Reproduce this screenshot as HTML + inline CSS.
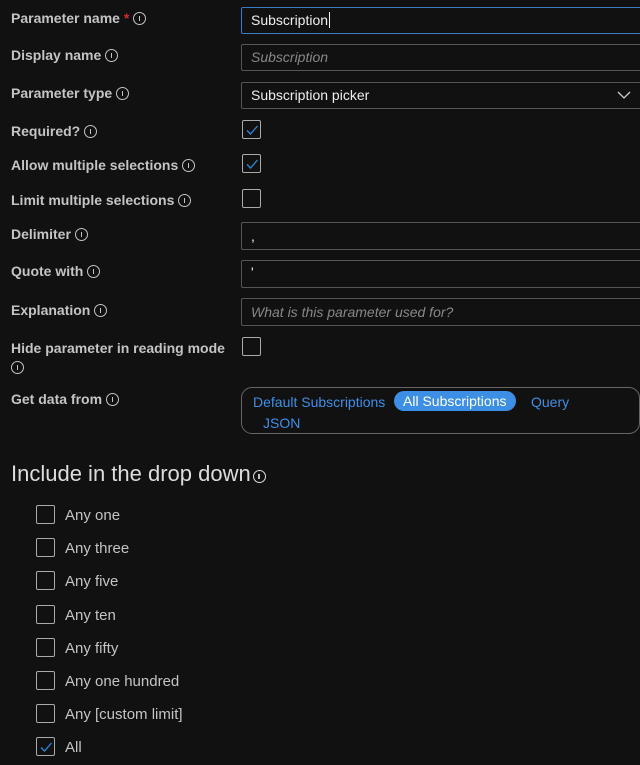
<!DOCTYPE html>
<html><head><style>
body{margin:0;background:#111;width:640px;height:765px;overflow:hidden;position:relative;font-family:"Liberation Sans",sans-serif;color:#c8c8c8}
.l{position:absolute;left:11px;font-size:14px;font-weight:bold;color:#c4c4c4;white-space:nowrap;line-height:16px}
.i{display:inline-block;width:13px;height:13px;border:1.3px solid #c4c4c4;border-radius:50%;position:relative;vertical-align:-2px;margin-left:4px;box-sizing:border-box}
.i:after{content:"";position:absolute;left:4.6px;top:3px;width:1.4px;height:5px;background:#c4c4c4}
.box{position:absolute;left:241px;width:410px;border:1px solid #555;border-radius:2px;box-sizing:border-box;font-size:14px;padding-left:9px;color:#eee}
.ph{color:#888;font-style:italic}
.cb{position:absolute;width:19px;height:19px;border:1px solid #aaa;border-radius:2px;box-sizing:border-box}
.cb svg{position:absolute;left:2px;top:2px}
.o{position:absolute;left:65px;font-size:15px;color:#c4c4c4}
</style></head><body>
<div class="l" style="top:10px">Parameter name <span style="color:#e0242a">*</span><span class="i"></span></div>
<div class="l" style="top:47px">Display name<span class="i"></span></div>
<div class="l" style="top:85px">Parameter type<span class="i"></span></div>
<div class="l" style="top:123px">Required?<span class="i"></span></div>
<div class="l" style="top:157px">Allow multiple selections<span class="i"></span></div>
<div class="l" style="top:192px">Limit multiple selections<span class="i"></span></div>
<div class="l" style="top:226px">Delimiter<span class="i"></span></div>
<div class="l" style="top:263px">Quote with<span class="i"></span></div>
<div class="l" style="top:302px">Explanation<span class="i"></span></div>
<div class="l" style="top:340px">Hide parameter in reading mode</div>
<div class="l" style="top:359px"><span class="i" style="margin-left:0"></span></div>
<div class="l" style="top:391px">Get data from<span class="i"></span></div>

<div class="box" style="top:7px;height:27px;line-height:25px;border-color:#3a7cc4">Subscription<span style="border-left:1px solid #eee;margin-left:1px"></span></div>
<div class="box" style="top:44px;height:27px;line-height:25px"><span class="ph">Subscription</span></div>
<div class="box" style="top:82px;height:27px;line-height:25px">Subscription picker
<svg style="position:absolute;left:375px;top:8px" width="14" height="9"><path d="M1 1 L7 7 L13 1" stroke="#ccc" stroke-width="1.3" fill="none"/></svg></div>
<div class="cb" style="left:242px;top:120px"><svg width="14" height="14"><path d="M2 7.5 L5.5 11 L12.5 3" stroke="#2f86d8" stroke-width="1.3" fill="none"/></svg></div>
<div class="cb" style="left:242px;top:154px"><svg width="14" height="14"><path d="M2 7.5 L5.5 11 L12.5 3" stroke="#2f86d8" stroke-width="1.3" fill="none"/></svg></div>
<div class="cb" style="left:242px;top:189px"></div>
<div class="box" style="top:222px;height:28px;line-height:26px">,</div>
<div class="box" style="top:260px;height:28px;line-height:22px">'</div>
<div class="box" style="top:298px;height:28px;line-height:26px"><span class="ph">What is this parameter used for?</span></div>
<div class="cb" style="left:242px;top:337px"></div>
<div style="position:absolute;left:241px;top:387px;width:399px;height:47px;border:1px solid #666;border-radius:11px;box-sizing:border-box;font-size:14px;color:#3d8fe6">
<span style="position:absolute;left:11px;top:6px">Default Subscriptions</span>
<span style="position:absolute;left:152px;top:3px;background:#3d8fe6;color:#fff;border-radius:10px;padding:2px 9px;line-height:16px">All Subscriptions</span>
<span style="position:absolute;left:289px;top:6px">Query</span>
<span style="position:absolute;left:21px;top:27px">JSON</span>
</div>

<div style="position:absolute;left:11px;top:461px;font-size:22px;color:#ddd">Include in the drop down<span class="i" style="border-color:#ddd;width:13px;height:13px;margin-left:2px"></span></div>

<div class="cb" style="left:36px;top:505px"></div><div class="o" style="top:507px">Any one</div>
<div class="cb" style="left:36px;top:538px"></div><div class="o" style="top:540px">Any three</div>
<div class="cb" style="left:36px;top:571px"></div><div class="o" style="top:573px">Any five</div>
<div class="cb" style="left:36px;top:605px"></div><div class="o" style="top:607px">Any ten</div>
<div class="cb" style="left:36px;top:638px"></div><div class="o" style="top:640px">Any fifty</div>
<div class="cb" style="left:36px;top:671px"></div><div class="o" style="top:673px">Any one hundred</div>
<div class="cb" style="left:36px;top:704px"></div><div class="o" style="top:706px">Any [custom limit]</div>
<div class="cb" style="left:36px;top:737px"><svg width="14" height="14"><path d="M2 7.5 L5.5 11 L12.5 3" stroke="#2f86d8" stroke-width="1.3" fill="none"/></svg></div><div class="o" style="top:739px">All</div>
</body></html>
